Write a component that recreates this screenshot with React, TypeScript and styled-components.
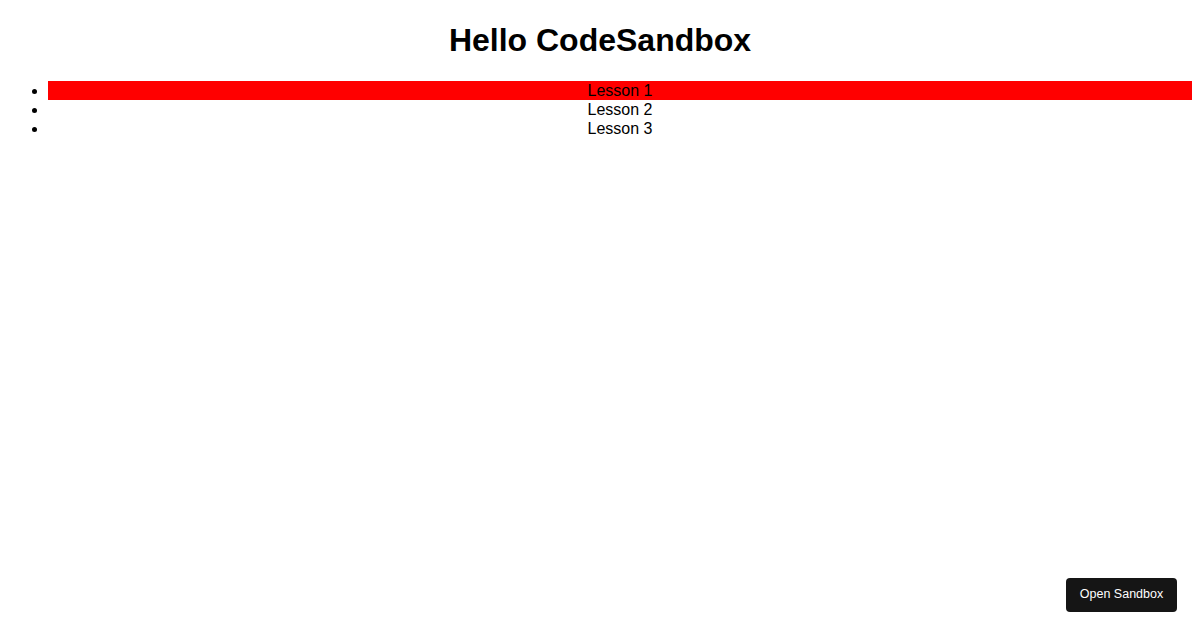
import styled, { createGlobalStyle } from 'styled-components';

const lessons = ['Lesson 1', 'Lesson 2', 'Lesson 3'];

const App = () => {
  return (
    <>
      <GlobalStyle />
      <AppWrapper>
        <Title>Hello CodeSandbox</Title>
        <LessonList>
          {lessons.map((lesson, index) => (
            <LessonItem key={lesson} active={index === 0}>
              {lesson}
            </LessonItem>
          ))}
        </LessonList>
      </AppWrapper>
      <OpenButton>Open Sandbox</OpenButton>
    </>
  );
};

const GlobalStyle = createGlobalStyle`
  body {
    margin: 0 8px 8px;
    background: #fff;
    color: #000;
    font-family: "Liberation Sans", Arial, sans-serif;
  }
`;

const AppWrapper = styled.div`
  font-family: "Liberation Sans", Arial, sans-serif;
  text-align: center;
`;

const Title = styled.h1`
  font-size: 2em;
  line-height: 38px;
  margin: 0.67em 0;
`;

const LessonList = styled.ul`
  margin: 1em 0;
  padding-left: 40px;
`;

const LessonItem = styled.li.withConfig({
  shouldForwardProp: (prop) => prop !== 'active',
})<{ active?: boolean }>`
  line-height: 19px;
  background-color: ${(p) => (p.active ? 'red' : 'transparent')};
`;

const OpenButton = styled.button`
  position: fixed;
  right: 23px;
  bottom: 18px;
  width: 111px;
  height: 34px;
  padding: 0 0 2px;
  border: none;
  border-radius: 4px;
  background: #151515;
  color: #fff;
  font-family: "Liberation Sans", Arial, sans-serif;
  font-size: 12.5px;
  cursor: pointer;
`;

export default App;
